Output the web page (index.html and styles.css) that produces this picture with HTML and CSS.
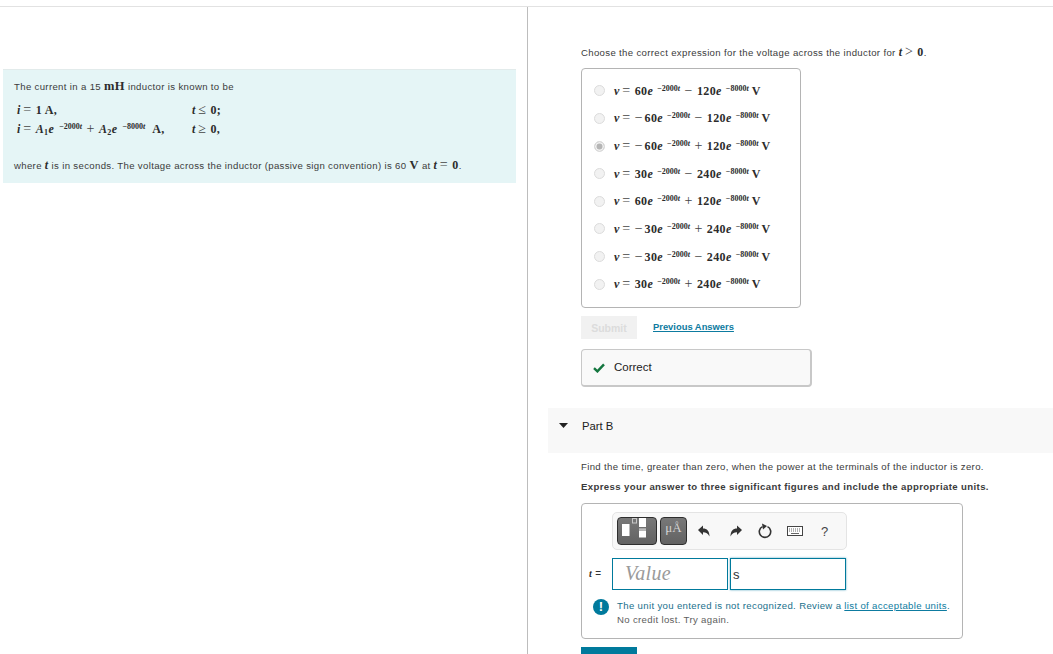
FILE: index.html
```html
<!DOCTYPE html>
<html lang="en">
<head>
<meta charset="utf-8">
<title>Inductor problem</title>
<link rel="stylesheet" href="styles.css">
</head>
<body>
<div class="topbar"></div>
<div class="page">
  <section class="left">
    <div class="panel">
      <p class="line">The current in a 15 <span class="m up">mH</span> inductor is known to be</p>
      <div class="cases">
        <div class="m col-main">
          <div class="case"><i>i</i><span class="op">=</span>1 A,</div>
          <div class="case"><i>i</i><span class="op">=</span><i>A</i><sub>1</sub><i>e</i><sup>−2000<i>t</i></sup><span class="op">+</span><i>A</i><sub>2</sub><i>e</i><sup>−8000<i>t</i></sup><span class="vu">A,</span></div>
        </div>
        <div class="m cond">
          <div class="case"><i>t</i><span class="op">≤</span>0;</div>
          <div class="case"><i>t</i><span class="op">≥</span>0,</div>
        </div>
      </div>
      <p class="line where">where <i class="m">t</i> is in seconds. The voltage across the inductor (passive sign convention) is 60 <span class="m up">V</span> at <span class="m"><i>t</i><span class="op">=</span>0</span>.</p>
    </div>
  </section>
  <section class="right">
    <p class="prompt">Choose the correct expression for the voltage across the inductor for <span class="m"><i>t</i><span class="op">&gt;</span>0</span>.</p>
    <div class="choices">
      <div class="choice"><span class="radio"></span><span class="m"><i>v</i><span class="op">=</span>60<i>e</i><sup>−2000<i>t</i></sup><span class="op">−</span>120<i>e</i><sup>−8000<i>t</i></sup><span class="vu">V</span></span></div>
      <div class="choice"><span class="radio"></span><span class="m"><i>v</i><span class="op">=</span><span class="neg">−</span>60<i>e</i><sup>−2000<i>t</i></sup><span class="op">−</span>120<i>e</i><sup>−8000<i>t</i></sup><span class="vu">V</span></span></div>
      <div class="choice"><span class="radio on"></span><span class="m"><i>v</i><span class="op">=</span><span class="neg">−</span>60<i>e</i><sup>−2000<i>t</i></sup><span class="op">+</span>120<i>e</i><sup>−8000<i>t</i></sup><span class="vu">V</span></span></div>
      <div class="choice"><span class="radio"></span><span class="m"><i>v</i><span class="op">=</span>30<i>e</i><sup>−2000<i>t</i></sup><span class="op">−</span>240<i>e</i><sup>−8000<i>t</i></sup><span class="vu">V</span></span></div>
      <div class="choice"><span class="radio"></span><span class="m"><i>v</i><span class="op">=</span>60<i>e</i><sup>−2000<i>t</i></sup><span class="op">+</span>120<i>e</i><sup>−8000<i>t</i></sup><span class="vu">V</span></span></div>
      <div class="choice"><span class="radio"></span><span class="m"><i>v</i><span class="op">=</span><span class="neg">−</span>30<i>e</i><sup>−2000<i>t</i></sup><span class="op">+</span>240<i>e</i><sup>−8000<i>t</i></sup><span class="vu">V</span></span></div>
      <div class="choice"><span class="radio"></span><span class="m"><i>v</i><span class="op">=</span><span class="neg">−</span>30<i>e</i><sup>−2000<i>t</i></sup><span class="op">−</span>240<i>e</i><sup>−8000<i>t</i></sup><span class="vu">V</span></span></div>
      <div class="choice"><span class="radio"></span><span class="m"><i>v</i><span class="op">=</span>30<i>e</i><sup>−2000<i>t</i></sup><span class="op">+</span>240<i>e</i><sup>−8000<i>t</i></sup><span class="vu">V</span></span></div>
    </div>
    <div class="actions">
      <span class="submit">Submit</span>
      <a class="prev" href="#">Previous Answers</a>
    </div>
    <div class="correct">
      <svg class="check" viewBox="0 0 12 10" width="12" height="10"><path d="M1 5.2 4.4 8.4 11 1.4" fill="none" stroke="#14763f" stroke-width="2.4"/></svg>
      <span>Correct</span>
    </div>
    <div class="partb">
      <svg class="caret" viewBox="0 0 9 5" width="9" height="5"><path d="M0 0h9L4.500 5z" fill="#222"/></svg>
      <span>Part B</span>
    </div>
    <p class="find">Find the time, greater than zero, when the power at the terminals of the inductor is zero.</p>
    <p class="express">Express your answer to three significant figures and include the appropriate units.</p>
    <div class="answer">
      <div class="toolbar">
        <span class="tool tool-a">
          <svg viewBox="0 0 38 26" width="38" height="26">
            <rect x="4" y="6" width="7.500" height="12" fill="#fff"/>
            <rect x="14.500" y=".5" width="4" height="4.500" fill="none" stroke="#c8c8c8"/>
            <rect x="21" y="0" width="7" height="9" fill="#fff"/>
            <rect x="21" y="10.500" width="7" height="1.200" fill="#ddd"/>
            <rect x="21" y="12.500" width="7" height="7" fill="#fff"/>
          </svg>
        </span>
        <span class="tool tool-b">μÅ</span>
        <svg class="ico first" viewBox="0 0 14 14" width="14" height="14"><path d="M1 6 6 1.500V4.500C10 4.500 12.500 7 12.500 12.500 11 9.500 9 8.200 6 8.200V11z" fill="#333"/></svg>
        <svg class="ico second" viewBox="0 0 14 14" width="14" height="14"><path d="M13 6 8 1.500V4.500C4 4.500 1.500 7 1.500 12.500 3 9.500 5 8.200 8 8.200V11z" fill="#333"/></svg>
        <svg class="ico third" viewBox="0 0 16 16" width="16" height="16"><path d="M5.500 3.600A5.700 5.700 0 1 0 10.500 3.600" fill="none" stroke="#333" stroke-width="1.600"/><path d="M4 .5 9 3 5 6.500z" fill="#333" transform="translate(1 0)"/></svg>
        <svg class="ico kb" viewBox="0 0 16 10" width="16" height="10"><rect x=".5" y=".5" width="15" height="9" fill="#fff" stroke="#444"/><path d="M2 3h12M2 5h12" stroke="#666" stroke-dasharray="1 1"/><path d="M4 7.500h8" stroke="#666"/></svg>
        <span class="help">?</span>
      </div>
      <div class="fields">
        <span class="t-label"><i class="m">t</i> =</span>
        <span class="field value">Value</span>
        <span class="field unit">s</span>
      </div>
      <div class="message">
        <span class="bang">!</span>
        <div>
          <div class="msg-a">The unit you entered is not recognized. Review a <a href="#">list of acceptable units</a>.</div>
          <div class="msg-b">No credit lost. Try again.</div>
        </div>
      </div>
    </div>
    <div class="next"></div>
  </section>
</div>
</body>
</html>
```
FILE: styles.css
```css
* { box-sizing: border-box; }
html, body { margin: 0; height: 654px; overflow: hidden; background: #fff; }
body { font-family: "Liberation Sans", Arial, sans-serif; font-size: 9.6px; color: #3b3b3b; letter-spacing: .34px; }
p { margin: 0; }
.topbar { height: 7px; border-bottom: 1px solid #e2e2e2; }
.page { display: flex; height: 647px; }
.left { width: 528px; border-right: 1px solid #bdbdbd; padding: 62px 11px 0 3px; flex: none; }
.right { flex: 1; min-width: 0; padding: 38px 0 0 53px; }

.m { font-family: "Liberation Serif", serif; font-weight: 700; color: #2c2c2c; font-size: 12px; letter-spacing: .4px; }
.m i { font-style: italic; }
.up { font-size: 12.500px; }
.op { font-weight: 400; font-size: 14px; margin: 0 4.500px 0 2.500px; letter-spacing: 0; color: #444; }
.neg { font-weight: 400; font-size: 14px; margin-right: 2px; letter-spacing: 0; color: #444; }
.vu { margin-left: 3px; }
sup { font-size: 8px; letter-spacing: 0; line-height: 0; vertical-align: 4px; margin: 0 0 0 4px; }
sub { font-size: 8px; line-height: 0; vertical-align: -2px; }
sup + .op { margin-left: 4.500px; }

.panel { background: #e5f5f6; height: 114px; padding: 9px 11px 0; border-top: 1px solid #e2ebeb; }
.line { line-height: 14px; }
.cases { display: flex; margin-top: 7px; height: 52px; padding-left: 3px; }
.case { height: 18.500px; line-height: 18.500px; white-space: nowrap; }
.case sup { margin-left: 5px; }
.case .vu { margin-left: 7px; }
.col-main { width: 175px; }
.where { margin-top: 5px; }

.prompt { line-height: 14px; height: 23px; }
.choices { width: 220px; height: 240px; border: 1px solid #b4b4b4; border-radius: 4px; padding: 8px 0 0 12px; }
.choice { display: flex; align-items: center; height: 27.640px; white-space: nowrap; }
.radio { width: 11px; height: 11px; border-radius: 50%; background: #f2f2f2; border: 1px solid #dcdcdc; margin-right: 9px; flex: none; }
.radio.on { background: #b5b5b5; box-shadow: inset 0 0 0 1.500px #f2f2f2; }

.actions { display: flex; align-items: center; margin-top: 8px; height: 23px; }
.submit { width: 56px; height: 23px; background: #f1f1f1; color: #dcdcdc; font-weight: 700; font-size: 10.500px; text-align: center; line-height: 24px; letter-spacing: 0; }
.prev { margin-left: 16px; color: #0d7ba0; font-weight: 700; font-size: 9.400px; letter-spacing: 0; margin-top: -2px; }

.correct { display: flex; align-items: center; width: 231px; height: 38px; margin-top: 10px; background: #f9f9f9; border: 1px solid #c8c8c8; border-right-width: 2px; border-bottom-width: 2px; border-radius: 4px; padding: 0 0 2px 11px; font-size: 11.500px; color: #222; letter-spacing: 0; }
.check { margin: 2px 9px 0 0; }

.partb { display: flex; align-items: center; height: 45px; margin: 21px 0 0 -33px; padding: 0 0 10px 11px; background: #f8f8f8; font-size: 11.300px; color: #222; letter-spacing: 0; }
.caret { margin-right: 14px; }

.find { margin-top: 7px; line-height: 14px; }
.express { margin-top: 6px; line-height: 14px; font-weight: 700; letter-spacing: .38px; }

.answer { width: 382px; height: 136px; margin-top: 9px; border: 1px solid #b4b4b4; border-radius: 4px; padding: 8px 0 0 30px; }
.toolbar { display: flex; align-items: center; width: 235px; height: 38px; background: #f8f8f8; border: 1px solid #e4e4e4; border-radius: 5px; padding-left: 4px; }
.tool { display: block; height: 28px; background: linear-gradient(#787878, #626262); border: 1px solid #2e2e2e; border-radius: 4px; }
.tool-a { width: 40px; }
.tool-a svg { display: block; }
.tool-b { width: 27px; margin-left: 3px; color: #d4d4d4; font-family: "Liberation Serif", serif; font-size: 13px; line-height: 19px; text-align: center; letter-spacing: 0; }
.ico { flex: none; }
.ico.first { margin-left: 10px; }
.ico.second { margin-left: 18px; }
.ico.third { margin-left: 14px; }
.ico.kb { margin-left: 14px; }
.help { margin-left: 18px; font-size: 13px; color: #444; }

.fields { display: flex; align-items: center; margin: 7px 0 0 -23px; height: 33px; }
.t-label { width: 23px; font-size: 10px; color: #333; }
.t-label .m { font-size: 10px; }
.field { display: block; width: 116px; height: 32px; border: 1.500px solid #007a9c; }
.value { font-family: "Liberation Serif", serif; font-style: italic; font-size: 20px; color: #9a9a9a; padding-left: 12px; line-height: 29px; letter-spacing: .3px; }
.unit { margin-left: 2px; font-size: 13px; line-height: 32px; color: #333; padding-left: 2px; box-shadow: 0 0 2px #5ba9c2; }

.message { display: flex; margin: 9px 0 0 -19px; }
.bang { width: 16px; height: 16px; flex: none; border-radius: 50%; background: #007a9c; color: #fff; font-weight: 700; font-size: 13px; line-height: 16px; text-align: center; margin: 0 8px 0 0; letter-spacing: 0; }
.msg-a { color: #19708c; line-height: 14px; }
.msg-a a { color: #0d7ba0; }
.msg-b { line-height: 14px; color: #5e5e5e; }

.next { width: 56px; height: 20px; margin-top: 8px; background: #007a9c; }
```
